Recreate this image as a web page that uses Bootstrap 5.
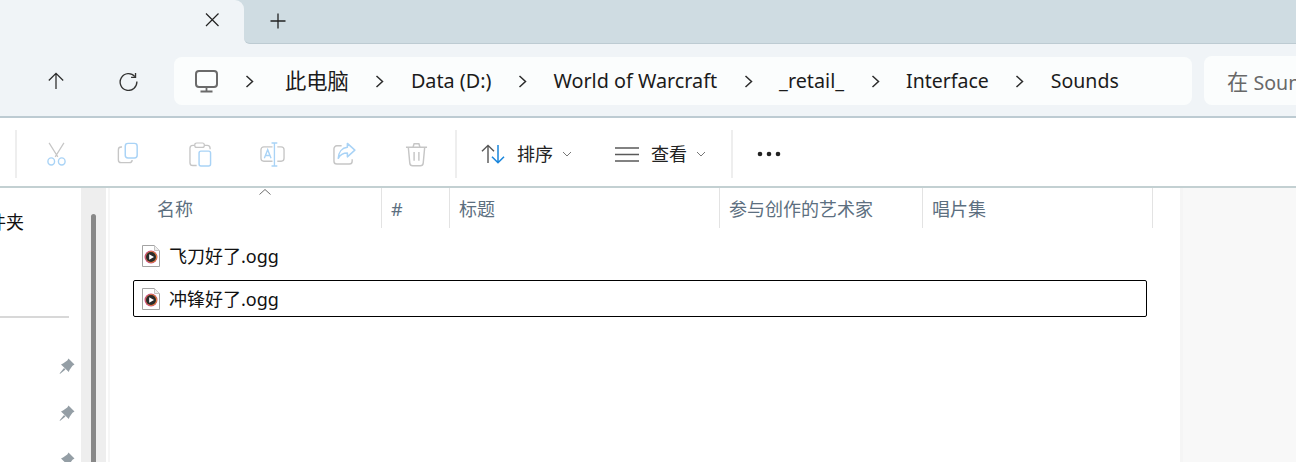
<!DOCTYPE html>
<html lang="zh">
<head>
<meta charset="utf-8">
<title>Sounds</title>
<link href="https://cdn.jsdelivr.net/npm/bootstrap@5.3.0/dist/css/bootstrap.min.css" rel="stylesheet">
<style>
html,body{height:462px;overflow:hidden;background:#fff}
body{font-family:"Noto Sans","Noto Sans CJK SC",sans-serif;color:#1b1b1b}
svg{display:block;flex:none}
.shell{width:1296px;height:462px;overflow:hidden}
.tabstrip{height:44px;background:#cfdce2;overflow:hidden}
.tab-on{width:244px;background:#f0f4f7;border-top-right-radius:9px;box-shadow:9px 9px 0 #f0f4f7;padding-left:204px}
.tab-on svg{margin-top:-4px}
.tab-rest{background:#cfdce2;border-bottom:1px solid #bdcbd2;border-bottom-left-radius:6px;padding-left:26px}
.tab-rest svg{margin-top:-2px}
.addr{height:74px;background:#f0f4f7;border-bottom:2px solid #bdcbd2;padding-bottom:11px;padding-top:13px}
.nav-btn{width:72px}
.nav-btn.first{margin-left:20px}
.crumbs{width:1018px;height:48px;background:#fbfdfd;border-radius:8px;margin-left:10px;padding-left:21px;font-size:19.8px;line-height:50px}
.cjk-big{font-size:21.3px}
.fit{font-size:19.5px}
.crumb-sep{width:62px}
.mon{width:50px}
.chev-first{width:40px}
.searchbox{flex:1;height:49px;margin-top:-1px;margin-left:12px;background:#fbfdfd;border-radius:8px 0 0 8px;padding-left:23px;font-size:19.6px;line-height:51px;color:#686868;white-space:nowrap;overflow:hidden}
.tools{height:70px;border-bottom:2px solid #c3d0d2;padding-left:15px;padding-top:4px}
.vsep{width:2px;height:48px;background:#eeeeee}
.tool-group{margin:0 3px}
.tool{width:72px}
.tools .lbl{font-size:18px;line-height:24px;margin-left:12px;color:#222}
.sort-btn{margin-left:24px}
.view-btn{margin-left:43px}
.cr{margin-left:9px}
.sep-last{margin-left:25px}
.more-btn{margin-left:24px}
.lower{height:272px}
.side{width:81px;overflow:hidden}
.side-title{font-size:18px;line-height:24px;margin:22px 0 0 -12px;white-space:nowrap;color:#111}
.side-rule{width:69px;height:2px;background:#d8d8d8;margin-top:82px}
.pin-row{height:47px;width:75px}
.pins{padding-top:24px}
.track{width:25px;background:#eeeeee;padding:26px 10px 0}
.thumb{width:5px;height:300px;background:#888;border-radius:3px 3px 0 0}
.pane{width:1075px;margin-left:2px;border-left:2px solid #f6f6f6;border-right:3px solid #f5f5f5}
.heads{height:40px;color:#5c6f80;font-size:18px;line-height:24px}
.hd{height:40px;border-right:1px solid #e3e3e3;padding-top:9px;padding-left:9px;white-space:nowrap}
.hd1{width:272px;padding-left:47px}
.hd2{width:68px}
.hd3{width:270px}
.hd4{width:203px}
.hd5{width:230px}
.up-caret{position:absolute;left:149px;top:1px}
.rows{padding:9px 0 0 23px;font-size:18px}
.frow{width:1014px;height:37px;gap:9px;padding-left:8px;margin-bottom:6px;border:1px solid transparent;border-radius:2px;color:#111}
.frow span{padding-top:2px}
.frow.cur{border-color:#000}
.aside-fill{flex:1;background:#f8f8f8}
</style>
</head>
<body>
<div class="shell d-flex flex-column">
  <div class="tabstrip d-flex flex-shrink-0">
    <div class="tab-on d-flex align-items-center">
      <svg width="16" height="16" viewBox="0 0 16 16"><path d="M2 1.500 14.500 14M14.500 1.500 2 14" stroke="#222" stroke-width="1.200" fill="none"/></svg>
    </div>
    <div class="tab-rest flex-grow-1 d-flex align-items-center">
      <svg width="16" height="16" viewBox="0 0 16 16"><path d="M8 .5V15.500M.5 8H15.500" stroke="#222" stroke-width="1.300" fill="none"/></svg>
    </div>
  </div>
  <div class="addr d-flex flex-shrink-0 align-items-center">
    <div class="nav-btn first d-flex justify-content-center">
      <svg width="18" height="18" viewBox="0 0 20 20"><path d="M10 19V2M2 9.500 10 1.500l8 8" stroke="#2b2b2b" stroke-width="1.400" fill="none"/></svg>
    </div>
    <div class="nav-btn d-flex justify-content-center">
      <svg width="19" height="19" viewBox="0 0 20 20"><path d="M16.700 4.800A8.800 8.800 0 1 0 18.800 10" stroke="#333" stroke-width="1.400" fill="none"/><path d="M17.400 1v4.700h-4.700" stroke="#333" stroke-width="1.400" fill="none"/></svg>
    </div>
    <div class="crumbs d-flex align-items-center flex-shrink-0">
      <div class="mon">
        <svg width="23" height="23" viewBox="0 0 23 23"><rect x="1" y="1" width="21" height="16" rx="3" stroke="#6a6a6a" stroke-width="2" fill="none"/><path d="M11.500 17v4M5.500 21.500h12" stroke="#6a6a6a" stroke-width="1.800" fill="none"/></svg>
      </div>
      <div class="chev-first d-flex"><svg width="9" height="13" viewBox="0 0 9 13"><path d="M1.500 1 7.500 6.500 1.500 12" stroke="#2b2b2b" stroke-width="1.500" fill="none"/></svg></div>
      <span class="cjk-big">此电脑</span>
      <div class="crumb-sep d-flex justify-content-center"><svg width="9" height="13" viewBox="0 0 9 13"><path d="M1.500 1 7.500 6.500 1.500 12" stroke="#2b2b2b" stroke-width="1.500" fill="none"/></svg></div>
      <span>Data (D:)</span>
      <div class="crumb-sep d-flex justify-content-center"><svg width="9" height="13" viewBox="0 0 9 13"><path d="M1.500 1 7.500 6.500 1.500 12" stroke="#2b2b2b" stroke-width="1.500" fill="none"/></svg></div>
      <span>World of Warcraft</span>
      <div class="crumb-sep d-flex justify-content-center"><svg width="9" height="13" viewBox="0 0 9 13"><path d="M1.500 1 7.500 6.500 1.500 12" stroke="#2b2b2b" stroke-width="1.500" fill="none"/></svg></div>
      <span>_retail_</span>
      <div class="crumb-sep d-flex justify-content-center"><svg width="9" height="13" viewBox="0 0 9 13"><path d="M1.500 1 7.500 6.500 1.500 12" stroke="#2b2b2b" stroke-width="1.500" fill="none"/></svg></div>
      <span class="fit">Interface</span>
      <div class="crumb-sep d-flex justify-content-center"><svg width="9" height="13" viewBox="0 0 9 13"><path d="M1.500 1 7.500 6.500 1.500 12" stroke="#2b2b2b" stroke-width="1.500" fill="none"/></svg></div>
      <span class="fit">Sounds</span>
    </div>
    <div class="searchbox"><span class="cjk-big">在</span> Sounds 中搜索</div>
  </div>
  <div class="tools d-flex flex-shrink-0 align-items-center">
    <div class="vsep"></div>
    <div class="tool-group d-flex">
      <div class="tool d-flex justify-content-center"><svg width="21" height="24" viewBox="0 0 24 26" preserveAspectRatio="none"><path d="M3.500 1 13.500 16M20.500 1 10.500 16" stroke="#c6c6c6" stroke-width="1.400" fill="none"/><circle cx="6" cy="21" r="3.800" stroke="#a9d3f6" stroke-width="1.600" fill="none"/><circle cx="18" cy="21" r="3.800" stroke="#a9d3f6" stroke-width="1.600" fill="none"/></svg></div>
      <div class="tool d-flex justify-content-center"><svg width="22" height="22" viewBox="0 0 24 24"><path d="M5.500 5.500H4.500A3 3 0 0 0 1.500 8.500v11a3 3 0 0 0 3 3h9a3 3 0 0 0 3-3" stroke="#c6c6c6" stroke-width="1.500" fill="none"/><rect x="9" y="1.500" width="13" height="16" rx="3" fill="#fff" stroke="#a9d3f6" stroke-width="1.600"/></svg></div>
      <div class="tool d-flex justify-content-center"><svg width="23" height="25" viewBox="0 0 24 26"><path d="M6 3.500H4A3 3 0 0 0 1 6.500v15a3 3 0 0 0 3 3h4M16 3.500h3a3 3 0 0 1 3 3v1" stroke="#c6c6c6" stroke-width="1.400" fill="none"/><rect x="6" y="1" width="10" height="4.500" rx="2" stroke="#c6c6c6" stroke-width="1.300" fill="none"/><rect x="10.500" y="9.500" width="12" height="15.500" rx="2" fill="#fff" stroke="#a9d3f6" stroke-width="1.500"/></svg></div>
      <div class="tool d-flex justify-content-center"><svg width="25" height="25" viewBox="0 0 26 26"><path d="M13 5H4A3 3 0 0 0 1 8v9a3 3 0 0 0 3 3h9M18 5h4a3 3 0 0 1 3 3v9a3 3 0 0 1-3 3h-4" stroke="#c6c6c6" stroke-width="1.400" fill="none"/><path d="M12 1h6M15 1v24M12 25h6M4.500 17l3.500-9 3.500 9M5.700 14h4.600" stroke="#a9d3f6" stroke-width="1.400" fill="none"/></svg></div>
      <div class="tool d-flex justify-content-center"><svg width="23" height="23" viewBox="0 0 24 24"><path d="M9 4H4A3 3 0 0 0 1 7v13a3 3 0 0 0 3 3h13a3 3 0 0 0 3-3v-2" stroke="#c6c6c6" stroke-width="1.500" fill="none"/><path d="M15 1.500 22.800 8.500 15 15.500V11.500C10.500 11.500 7.500 13 5.500 17 5.800 10.500 9.500 6 15 5.500Z" stroke="#a9d3f6" stroke-width="1.600" fill="none" stroke-linejoin="round"/></svg></div>
      <div class="tool d-flex justify-content-center"><svg width="23" height="25" viewBox="0 0 24 26"><path d="M1 5.500H23M8.500 5 9.500 1.800h5L15.500 5M3.500 6 5 22a3 3 0 0 0 3 2.700h8A3 3 0 0 0 19 22L20.500 6M9.500 10.500v9M14.500 10.500v9" stroke="#c6c6c6" stroke-width="1.500" fill="none"/></svg></div>
    </div>
    <div class="vsep"></div>
    <div class="sort-btn d-flex align-items-center">
      <svg width="24" height="20" viewBox="0 0 24 22" preserveAspectRatio="none"><path d="M7 21V2M1 8 7 1.500 13 8" stroke="#555" stroke-width="1.400" fill="none"/><path d="M17 1V20M11 14 17 20.500 23 14" stroke="#1a86dc" stroke-width="1.500" fill="none"/></svg>
      <span class="lbl">排序</span>
      <svg class="cr" width="10" height="6" viewBox="0 0 10 6"><path d="M1 1 5 5 9 1" stroke="#777" stroke-width="1" fill="none"/></svg>
    </div>
    <div class="view-btn d-flex align-items-center">
      <svg width="24" height="15" viewBox="0 0 24 15"><path d="M0 1H24M0 7.500H24M0 14H24" stroke="#5a5a5a" stroke-width="1.400" fill="none"/></svg>
      <span class="lbl">查看</span>
      <svg class="cr" width="10" height="6" viewBox="0 0 10 6"><path d="M1 1 5 5 9 1" stroke="#777" stroke-width="1" fill="none"/></svg>
    </div>
    <div class="vsep sep-last"></div>
    <div class="more-btn d-flex align-items-center">
      <svg width="24" height="6" viewBox="0 0 24 6"><circle cx="3" cy="3" r="2.300" fill="#222"/><circle cx="12" cy="3" r="2.300" fill="#222"/><circle cx="21" cy="3" r="2.300" fill="#222"/></svg>
    </div>
  </div>
  <div class="lower d-flex flex-grow-1">
    <div class="side flex-shrink-0">
      <div class="side-title">件夹</div>
      <div class="side-rule"></div>
      <div class="pins">
        <div class="pin-row d-flex justify-content-end align-items-center"><svg width="16" height="16" viewBox="0 0 16 16"><path d="M9.500.5 15.500 6.500 13.500 7.800 10.500 12 9.800 14 2 6.500 4 5.500 8.300 2.500Z M5 10 .5 15.500 1.200 15.800 6.500 11.500Z" fill="#949ea5"/></svg></div>
        <div class="pin-row d-flex justify-content-end align-items-center"><svg width="16" height="16" viewBox="0 0 16 16"><path d="M9.500.5 15.500 6.500 13.500 7.800 10.500 12 9.800 14 2 6.500 4 5.500 8.300 2.500Z M5 10 .5 15.500 1.200 15.800 6.500 11.500Z" fill="#949ea5"/></svg></div>
        <div class="pin-row d-flex justify-content-end align-items-center"><svg width="16" height="16" viewBox="0 0 16 16"><path d="M9.500.5 15.500 6.500 13.500 7.800 10.500 12 9.800 14 2 6.500 4 5.500 8.300 2.500Z M5 10 .5 15.500 1.200 15.800 6.500 11.500Z" fill="#949ea5"/></svg></div>
      </div>
    </div>
    <div class="track flex-shrink-0"><div class="thumb"></div></div>
    <div class="pane flex-shrink-0">
      <div class="heads d-flex">
        <div class="hd hd1 position-relative">名称<svg class="up-caret" width="12" height="6" viewBox="0 0 12 6"><path d="M.5 5.500 6 .5 11.500 5.500" stroke="#6d6d6d" stroke-width="1" fill="none"/></svg></div>
        <div class="hd hd2">#</div>
        <div class="hd hd3">标题</div>
        <div class="hd hd4">参与创作的艺术家</div>
        <div class="hd hd5">唱片集</div>
      </div>
      <div class="rows">
        <div class="frow d-flex align-items-center">
          <svg width="18" height="22" viewBox="0 0 18 22"><path d="M.5.5H12.500L17.500 5.500V21.500H.5Z" fill="#fff" stroke="#a3a3a3"/><path d="M12.500.5V5.500H17.500" fill="#eee" stroke="#c4c4c4"/><circle cx="9" cy="12" r="6.500" fill="#c4487f"/><circle cx="9.300" cy="12" r="5.700" fill="#e78a2f"/><circle cx="9" cy="12" r="5" fill="#2a2a2c"/><path d="M7.200 9.300 12 12 7.200 14.700Z" fill="#fff"/></svg>
          <span>飞刀好了.ogg</span>
        </div>
        <div class="frow cur d-flex align-items-center">
          <svg width="18" height="22" viewBox="0 0 18 22"><path d="M.5.5H12.500L17.500 5.500V21.500H.5Z" fill="#fff" stroke="#a3a3a3"/><path d="M12.500.5V5.500H17.500" fill="#eee" stroke="#c4c4c4"/><circle cx="9" cy="12" r="6.500" fill="#c4487f"/><circle cx="9.300" cy="12" r="5.700" fill="#e78a2f"/><circle cx="9" cy="12" r="5" fill="#2a2a2c"/><path d="M7.200 9.300 12 12 7.200 14.700Z" fill="#fff"/></svg>
          <span>冲锋好了.ogg</span>
        </div>
      </div>
    </div>
    <div class="aside-fill"></div>
  </div>
</div>
<script src="https://cdn.jsdelivr.net/npm/bootstrap@5.3.0/dist/js/bootstrap.bundle.min.js"></script>
</body>
</html>
